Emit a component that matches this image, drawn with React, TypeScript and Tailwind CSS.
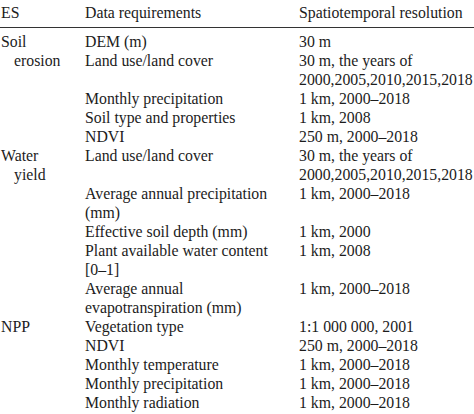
const rows = [
  {
    es: ["Soil", "erosion"],
    items: [
      ["DEM (m)", "30 m"],
      ["Land use/land cover", "30 m, the years of 2000,2005,2010,2015,2018"],
      ["Monthly precipitation", "1 km, 2000–2018"],
      ["Soil type and properties", "1 km, 2008"],
      ["NDVI", "250 m, 2000–2018"],
    ],
  },
  {
    es: ["Water", "yield"],
    items: [
      ["Land use/land cover", "30 m, the years of 2000,2005,2010,2015,2018"],
      ["Average annual precipitation (mm)", "1 km, 2000–2018"],
      ["Effective soil depth (mm)", "1 km, 2000"],
      ["Plant available water content [0–1]", "1 km, 2008"],
      ["Average annual evapotranspiration (mm)", "1 km, 2000–2018"],
    ],
  },
  {
    es: ["NPP"],
    items: [
      ["Vegetation type", "1:1 000 000, 2001"],
      ["NDVI", "250 m, 2000–2018"],
      ["Monthly temperature", "1 km, 2000–2018"],
      ["Monthly precipitation", "1 km, 2000–2018"],
      ["Monthly radiation", "1 km, 2000–2018"],
    ],
  },
];

export default function App() {
  return (
    <div className="w-[474px] h-[414px] overflow-hidden bg-white text-[#1c1c1c] text-[15.8px] leading-[19px]" style={{ fontFamily: '"Liberation Serif", "Times New Roman", serif' }}>
      <div className="grid grid-cols-[85px_214px_1fr] pt-[3px] pb-[5px] border-b border-[#333]">
        <div className="pl-[1px]">ES</div>
        <div>Data requirements</div>
        <div>Spatiotemporal resolution</div>
      </div>
      <div className="grid grid-cols-[85px_214px_1fr] pt-[4px]">
        {rows.map((group) => (
          <div key={group.es.join(" ")} className="contents">
            <div className="row-span-5 pl-[1px]">
              {group.es.map((line, i) => (
                <div key={line} className={i > 0 ? "pl-[13px]" : ""}>{line}</div>
              ))}
            </div>
            {group.items.map(([req, res], i) => (
              <div key={i} className="contents">
                <div className="pr-4 max-w-[205px]">{req}</div>
                <div className="whitespace-normal">{res}</div>
              </div>
            ))}
          </div>
        ))}
      </div>
    </div>
  );
}
